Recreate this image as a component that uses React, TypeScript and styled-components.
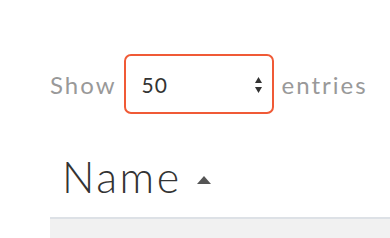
import styled, { createGlobalStyle } from "styled-components";

const GlobalStyle = createGlobalStyle`
  html, body {
    margin: 0;
    padding: 0;
    background: #fff;
  }
  body {
    font-family: Lato, "Open Sans", sans-serif;
    overflow: hidden;
  }
`;

const Page = styled.div`
  padding: 54px 0 0 50px;
`;

const Controls = styled.div`
  display: flex;
  align-items: center;
  gap: 7px;
  height: 60px;
`;

const Label = styled.span`
  font-size: 24px;
  letter-spacing: 2px;
  color: #999;
  font-weight: 400;
`;

const SelectWrap = styled.div`
  position: relative;
  width: 150px;
  height: 60px;
  margin-right: 1px;
`;

const Select = styled.select`
  appearance: none;
  -webkit-appearance: none;
  box-sizing: border-box;
  width: 100%;
  height: 100%;
  border: 2px solid #f05a36;
  border-radius: 7px;
  background: #fff;
  padding: 0 0 0 16px;
  font-family: Lato, "Open Sans", sans-serif;
  font-size: 21px;
  letter-spacing: 1px;
  color: #333;
  outline: none;
`;

const Arrows = styled.svg`
  position: absolute;
  right: 12px;
  top: 23px;
  pointer-events: none;
`;

const Table = styled.div``;

const HeaderRow = styled.div`
  display: flex;
  align-items: flex-start;
  height: 103px;
  padding: 37px 0 0 12px;
  box-sizing: border-box;
`;

const HeaderCell = styled.div`
  display: flex;
  align-items: flex-start;
  gap: 15px;
  font-size: 43px;
  line-height: 1.2;
  font-weight: 300;
  color: #333;
  letter-spacing: 2.5px;
`;

const SortIcon = styled.svg`
  margin-top: 25px;
`;

const BodyRow = styled.div`
  height: 40px;
  background: #f1f1f1;
  border-top: 2px solid #dde1e6;
`;

export default function App() {
  return (
    <>
      <GlobalStyle />
      <Page>
        <Controls>
          <Label>Show</Label>
          <SelectWrap>
            <Select defaultValue="50">
              <option value="10">10</option>
              <option value="25">25</option>
              <option value="50">50</option>
              <option value="100">100</option>
            </Select>
            <Arrows width="7" height="16" viewBox="0 0 7 16">
              <path d="M3.5 0 L7 6 L0 6 Z" fill="#333" />
              <path d="M0 10 L7 10 L3.5 16 Z" fill="#333" />
            </Arrows>
          </SelectWrap>
          <Label>entries</Label>
        </Controls>
        <Table>
          <HeaderRow>
            <HeaderCell>
              Name
              <SortIcon width="14" height="8" viewBox="0 0 14 8">
                <path d="M7 0 L14 8 L0 8 Z" fill="#555" />
              </SortIcon>
            </HeaderCell>
          </HeaderRow>
          <BodyRow />
        </Table>
      </Page>
    </>
  );
}
